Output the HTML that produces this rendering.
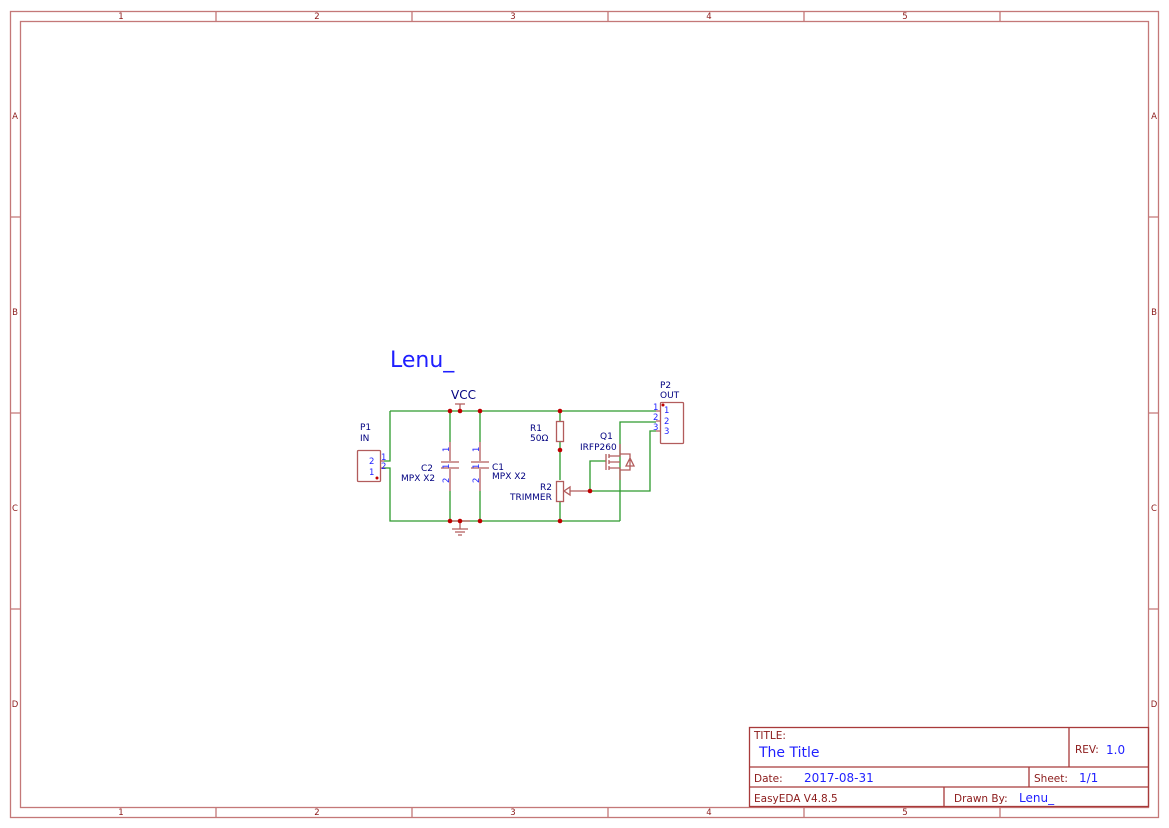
<!DOCTYPE html>
<html><head><meta charset="utf-8"><style>
html,body{margin:0;padding:0;background:#fff;width:1169px;height:828px;overflow:hidden}
svg{display:block}
text{font-family:"DejaVu Sans","Liberation Sans",sans-serif}
</style></head><body>
<svg width="1169" height="828" viewBox="0 0 1169 828" xmlns="http://www.w3.org/2000/svg">
<g stroke="#c47878" stroke-width="1.3" fill="none">
<rect x="10.5" y="11.5" width="1148" height="806"/>
<rect x="20.5" y="21.5" width="1128" height="786"/>
<path d="M216 11V21M412 11V21M608 11V21M804 11V21M1000 11V21M216 807V817M412 807V817M608 807V817M804 807V817M1000 807V817M10 217H20M10 413H20M10 609H20M1148 217H1158M1148 413H1158M1148 609H1158"/>
</g>
<g fill="#8b1a1a" font-size="8.5" text-anchor="middle">
<text x="121" y="19">1</text><text x="317" y="19">2</text><text x="513" y="19">3</text><text x="709" y="19">4</text><text x="905" y="19">5</text>
<text x="121" y="815">1</text><text x="317" y="815">2</text><text x="513" y="815">3</text><text x="709" y="815">4</text><text x="905" y="815">5</text>
<text x="15" y="119">A</text><text x="15" y="315">B</text><text x="15" y="511">C</text><text x="15" y="707">D</text>
<text x="1154" y="119">A</text><text x="1154" y="315">B</text><text x="1154" y="511">C</text><text x="1154" y="707">D</text>
</g>
<g stroke="#a83a3a" stroke-width="1.3" fill="none">
<rect x="749.5" y="727.5" width="399" height="79"/>
<path d="M749 767H1148M749 787H1148M1069 727V767M1029 767V787M944 787V807"/>
</g>
<g font-size="10.5" fill="#8b1a1a">
<text x="754" y="739">TITLE:</text>
<text x="1075" y="753">REV:</text>
<text x="754" y="782">Date:</text>
<text x="1034" y="782">Sheet:</text>
<text x="754" y="802">EasyEDA V4.8.5</text>
<text x="954" y="802">Drawn By:</text>
</g>
<g fill="#1f1fff">
<text x="759" y="757" font-size="14">The Title</text>
<text x="1106" y="754" font-size="12">1.0</text>
<text x="804" y="782" font-size="12">2017-08-31</text>
<text x="1079" y="782" font-size="12">1/1</text>
<text x="1019" y="802" font-size="12">Lenu_</text>
<text x="390" y="367" font-size="22">Lenu_</text>
</g>
<g stroke="#2d9a2d" stroke-width="1.3" fill="none">
<path d="M390 411H656M390 411V461H384M384 468H390V521H620M450 411V442M450 491V521M480 411V442M480 491V521M560 411V421M560 441V480M560 501V521M620 521V422H656M590 491H650V431H656M590 491V461H606M620 444V454"/>
</g>
<g stroke="#b25c5c" stroke-width="1.3" fill="none">
<rect x="357.5" y="450.5" width="23" height="31" rx="1"/>
<rect x="660.5" y="402.5" width="23" height="41" rx="1"/>
<path d="M380 461H384M380 468H384M656 411H660M656 421H660M656 431H660"/>
<path d="M450 442V461M441 462H459M441 468H459M450 469V491M480 442V461M471 462H489M471 468H489M480 469V491"/>
<rect x="556.5" y="421.5" width="7" height="20"/>
<rect x="556.5" y="481.5" width="7" height="20"/>
<path d="M564 491L570 487V495Z M570 491H590"/>
<path d="M606 454V470M609 454V458M609 460V464M609 466V470M609 456H620V444M609 462H620M609 468H620V480M620 454H630V470H620M626 466H634M630 458L626 466H634Z"/>
<path d="M460 411V404M455 404H465M450 521H470M460 521V529M452 529H468M455 532H465M458 535H462"/>
</g>
<g fill="#c00000">
<circle cx="450" cy="411" r="2.3"/><circle cx="460" cy="411" r="2.3"/><circle cx="480" cy="411" r="2.3"/><circle cx="560" cy="411" r="2.3"/>
<circle cx="450" cy="521" r="2.3"/><circle cx="460" cy="521" r="2.3"/><circle cx="480" cy="521" r="2.3"/><circle cx="560" cy="521" r="2.3"/>
<circle cx="560" cy="450" r="2.3"/><circle cx="590" cy="491" r="2.3"/>
<circle cx="377" cy="478" r="1.5"/><circle cx="663" cy="405" r="1.5"/>
</g>
<g font-size="9" fill="#000080">
<text x="360" y="430">P1</text><text x="360" y="441">IN</text>
<text x="660" y="388">P2</text><text x="660" y="398">OUT</text>
<text x="530" y="431">R1</text><text x="530" y="441">50Ω</text>
<text x="600" y="439">Q1</text><text x="580" y="450">IRFP260</text>
<text x="540" y="490">R2</text><text x="510" y="500">TRIMMER</text>
<text x="421" y="471">C2</text><text x="401" y="481">MPX X2</text>
<text x="492" y="470">C1</text><text x="492" y="479">MPX X2</text>
<text x="451" y="399" font-family="Liberation Serif,serif" font-size="12">VCC</text>
</g>
<g font-size="8.5" fill="#1f1fff">
<text x="369" y="464">2</text><text x="369" y="475">1</text>
<text x="381" y="460">1</text><text x="381" y="469">2</text>
<text x="653" y="410">1</text><text x="653" y="420">2</text><text x="653" y="430">3</text>
<text x="664" y="413">1</text><text x="664" y="424">2</text><text x="664" y="434">3</text>
<text transform="translate(449,452) rotate(-90)">1</text>
<text transform="translate(449,469) rotate(-90)">1</text>
<text transform="translate(449,483) rotate(-90)">2</text>
<text transform="translate(479,452) rotate(-90)">1</text>
<text transform="translate(479,469) rotate(-90)">1</text>
<text transform="translate(479,483) rotate(-90)">2</text>
</g>
</svg>
</body></html>
